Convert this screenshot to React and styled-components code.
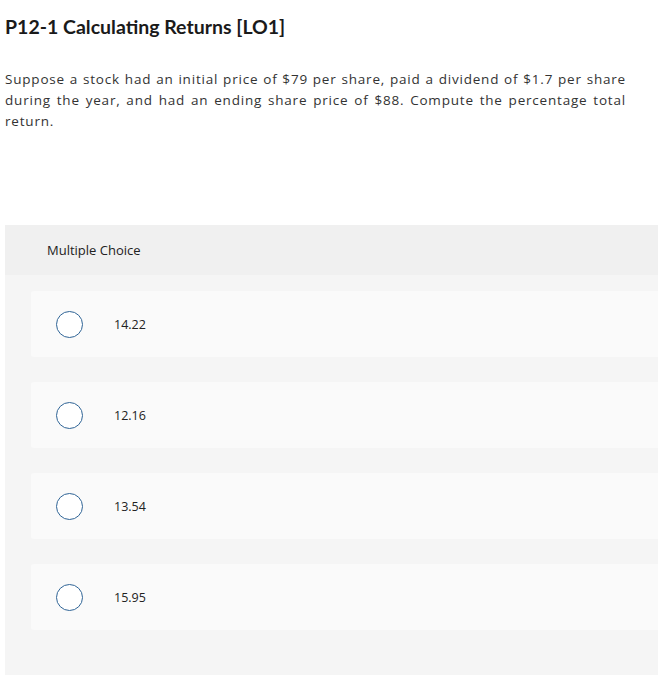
import React from "react";
import styled, { createGlobalStyle } from "styled-components";

const Global = createGlobalStyle`
  html, body { margin: 0; padding: 0; background: #fff; }
  body { font-family: "Lato", "Open Sans", sans-serif; color: #333; }
`;

const Page = styled.div`
  padding: 14px 0 0 5px;
  width: 653px;
`;

const Title = styled.h1`
  margin: 0;
  font-family: "Lato", sans-serif;
  font-weight: 700;
  font-size: 19.5px;
  line-height: 26px;
  color: #1a1a1a;
  letter-spacing: 0;
`;

const Question = styled.p`
  margin: 29px 0 0 0;
  width: 621px;
  font-family: "Open Sans", sans-serif;
  font-size: 13.5px;
  line-height: 21px;
  letter-spacing: 0.8px;
  word-spacing: 0.5px;
  text-align: justify;
  color: #333;
`;

const Panel = styled.section`
  margin-top: 93px;
  background: #f5f5f5;
  padding-bottom: 50px;
`;

const PanelHeader = styled.div`
  height: 50px;
  background: #f0f0f0;
  display: flex;
  align-items: center;
  padding-left: 42px;
  font-family: "Open Sans", sans-serif;
  font-size: 13px;
  color: #222;
`;

const Options = styled.div`
  display: flex;
  flex-direction: column;
  gap: 25px;
  padding: 16px 0 0 26px;
`;

const Option = styled.label`
  height: 66px;
  background: #fafafa;
  border-radius: 3px 0 0 3px;
  display: flex;
  align-items: center;
  padding-left: 25px;
  gap: 31px;
`;

const Radio = styled.span`
  width: 25px;
  height: 25px;
  border-radius: 50%;
  border: 1.5px solid #2f6496;
  background: #fff;
  flex: none;
`;

const OptionText = styled.span`
  font-family: "Open Sans", sans-serif;
  font-size: 12.5px;
  color: #222;
`;

const choices = ["14.22", "12.16", "13.54", "15.95"];

export default function App() {
  return (
    <>
      <Global />
      <Page>
        <Title>P12-1 Calculating Returns [LO1]</Title>
        <Question>
          Suppose a stock had an initial price of $79 per share, paid a dividend of $1.7 per share
          during the year, and had an ending share price of $88. Compute the percentage total
          return.
        </Question>
        <Panel>
          <PanelHeader>Multiple Choice</PanelHeader>
          <Options>
            {choices.map((c) => (
              <Option key={c}>
                <Radio />
                <OptionText>{c}</OptionText>
              </Option>
            ))}
          </Options>
        </Panel>
      </Page>
    </>
  );
}
